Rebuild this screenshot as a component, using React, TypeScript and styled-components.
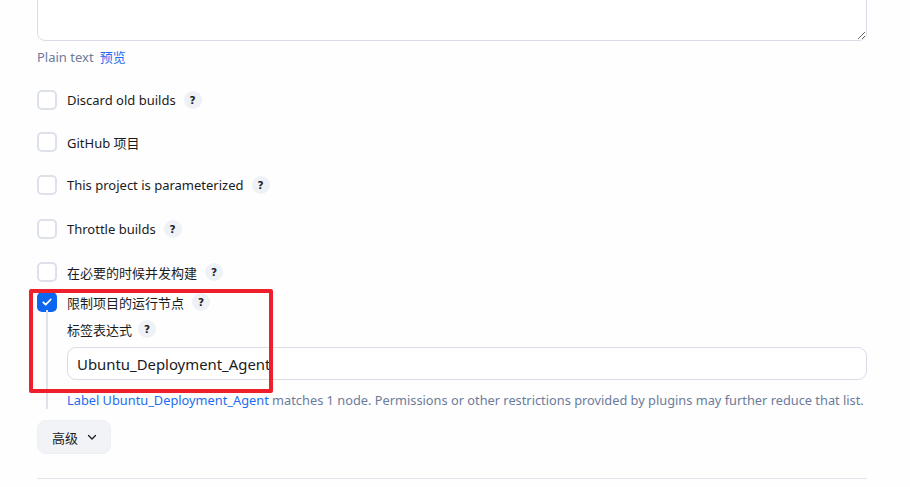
import styled, { createGlobalStyle } from "styled-components";

const GlobalStyle = createGlobalStyle`
    html, body {
        margin: 0;
        padding: 0;
        background: #fefefe;
    }
    body {
        font-family: "Noto Sans", "Noto Sans CJK SC", sans-serif;
        color: #1b1b22;
        overflow: hidden;
    }
`;

const Page = styled.div`
    position: relative;
    display: flow-root;
    width: 830px;
    padding-left: 37px;
    height: 487px;
`;

const TextArea = styled.textarea`
    display: block;
    box-sizing: border-box;
    width: 100%;
    height: 60px;
    margin-top: -19px;
    border: 1.5px solid #d9dde6;
    border-radius: 8px;
    background: #fff;
    resize: vertical;
    outline: none;
`;

const Syntax = styled.div`
    display: flex;
    gap: 6px;
    margin-top: 7px;
    font-size: 13px;
    line-height: 18px;
    color: #6c7b9b;
`;

const Link = styled.a`
    color: #1d6cf0;
    text-decoration: none;
`;

const Options = styled.div`
    display: flex;
    flex-direction: column;
    margin-top: 24px;
`;

const Row = styled.label<{ $gap?: number }>`
    display: flex;
    align-items: center;
    gap: 10px;
    height: 20px;
    margin-bottom: ${(p) => p.$gap ?? 23}px;
    font-size: 13px;
`;

const Box = styled.span<{ $checked?: boolean }>`
    box-sizing: border-box;
    width: 20px;
    height: 20px;
    flex: none;
    border-radius: 5px;
    border: 2px solid ${(p) => (p.$checked ? "#0c66f0" : "#dde1ea")};
    background: ${(p) => (p.$checked ? "#0c66f0" : "#fff")};
    display: flex;
    align-items: center;
    justify-content: center;
`;

const Help = styled.span`
    width: 18px;
    height: 18px;
    margin-left: -2px;
    border-radius: 50%;
    background: #eef1f5;
    color: #22232b;
    font-size: 10.5px;
    font-weight: 700;
    display: flex;
    align-items: center;
    justify-content: center;
    font-family: "DejaVu Sans", sans-serif;
`;

const Nested = styled.div`
    margin-left: 9px;
    padding-left: 19px;
    border-left: 2px solid #dfe3ea;
    margin-top: -2px;
    padding-top: 10px;
    display: flex;
    flex-direction: column;
`;

const FieldLabel = styled.div`
    display: flex;
    align-items: center;
    gap: 8px;
    font-size: 13px;
    height: 18px;
`;

const Input = styled.input`
    box-sizing: border-box;
    width: 100%;
    height: 33px;
    margin-top: 9px;
    padding: 0 9px;
    border: 1.5px solid #d9dde6;
    border-radius: 9px;
    background: #fff;
    font-family: "Noto Sans", sans-serif;
    font-size: 14.9px;
    color: #1b1b22;
    outline: none;
`;

const Description = styled.div`
    margin-top: 11px;
    font-size: 12.8px;
    line-height: 18px;
    color: #6c7b9b;
    white-space: nowrap;
`;

const AdvancedButton = styled.button`
    display: flex;
    align-items: center;
    gap: 9px;
    height: 34px;
    margin-top: 11px;
    padding: 0 13px 0 14px;
    border: 1px solid #eceff4;
    border-radius: 9px;
    background: #f1f3f7;
    font-family: "Noto Sans", "Noto Sans CJK SC", sans-serif;
    font-size: 13px;
    color: #1b1b22;
    align-self: flex-start;
`;

const Divider = styled.hr`
    margin: 24px 0 0;
    border: none;
    border-top: 1.5px solid #e3e6ec;
`;

const Annotation = styled.div`
    position: absolute;
    left: 29px;
    top: 289px;
    width: 244px;
    height: 104px;
    box-sizing: border-box;
    border: 4px solid #ee1f2b;
    border-radius: 2px;
    pointer-events: none;
`;

function Check() {
    return (
        <svg width="12" height="12" viewBox="0 0 12 12" fill="none">
            <path d="M2.3 6.3l2.4 2.4 5-5.2" stroke="#fff" strokeWidth="1.8" strokeLinecap="round" strokeLinejoin="round" />
        </svg>
    );
}

function Chevron() {
    return (
        <svg width="10" height="10" viewBox="0 0 10 10" fill="none">
            <path d="M1.5 3.5l3.5 3.5 3.5-3.5" stroke="#1b1b22" strokeWidth="1.3" strokeLinecap="round" strokeLinejoin="round" />
        </svg>
    );
}

const options: { label: string; help: boolean }[] = [
    { label: "Discard old builds", help: true },
    { label: "GitHub 项目", help: false },
    { label: "This project is parameterized", help: true },
    { label: "Throttle builds", help: true },
    { label: "在必要的时候并发构建", help: true },
];

const gaps = [22, 23, 24, 23, 10];

export default function App() {
    return (
        <>
            <GlobalStyle />
            <Page>
                <TextArea />
                <Syntax>
                    <span>Plain text</span>
                    <Link href="#">预览</Link>
                </Syntax>
                <Options>
                    {options.map((o, i) => (
                        <Row key={o.label} $gap={gaps[i]}>
                            <Box />
                            <span>{o.label}</span>
                            {o.help && <Help>?</Help>}
                        </Row>
                    ))}
                    <Row $gap={0}>
                        <Box $checked>
                            <Check />
                        </Box>
                        <span>限制项目的运行节点</span>
                        <Help>?</Help>
                    </Row>
                    <Nested>
                        <FieldLabel>
                            <span>标签表达式</span>
                            <Help>?</Help>
                        </FieldLabel>
                        <Input defaultValue="Ubuntu_Deployment_Agent" />
                        <Description>
                            <Link href="#">Label Ubuntu_Deployment_Agent</Link> matches 1 node. Permissions or other
                            restrictions provided by plugins may further reduce that list.
                        </Description>
                    </Nested>
                    <AdvancedButton>
                        高级
                        <Chevron />
                    </AdvancedButton>
                </Options>
                <Divider />
                <Annotation />
            </Page>
        </>
    );
}
